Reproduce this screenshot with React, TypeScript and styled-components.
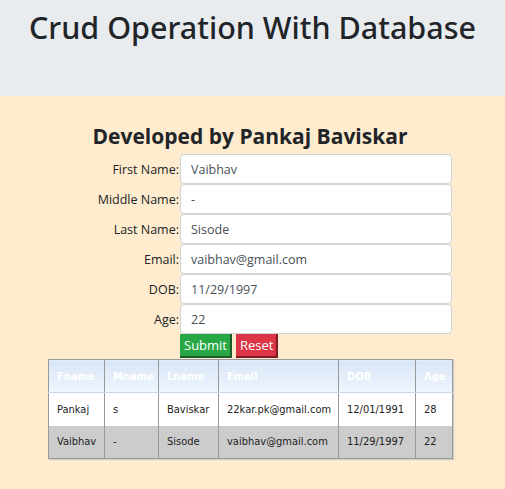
import styled, { createGlobalStyle } from "styled-components";

const GlobalStyle = createGlobalStyle`
  html, body {
    margin: 0;
    padding: 0;
    background: #ffebcd;
  }
  * {
    box-sizing: border-box;
  }
`;

// 상단 제목 영역
const Jumbo = styled.header`
  height: 96px;
  background: #e9ecef;
  padding-top: 7px;
`;

const Title = styled.h1`
  margin: 0;
  text-align: center;
  font-family: "Noto Sans", "Open Sans", sans-serif;
  font-weight: 500;
  font-size: 30.5px;
  line-height: 40px;
  color: #212529;
`;

const Page = styled.main`
  min-height: 393px;
  background: #ffebcd;
  padding: 27px 0 0 48px;
`;

const Subtitle = styled.h3`
  margin: 0 0 5px;
  width: 404px;
  text-align: center;
  font-family: "Open Sans", "Noto Sans", sans-serif;
  font-weight: 700;
  font-size: 21px;
  line-height: 26px;
  color: #212529;
`;

const Form = styled.form`
  display: grid;
  grid-template-columns: 132px 272px;
  margin-bottom: 1px;
  font-family: "Open Sans", "Noto Sans", sans-serif;
  font-size: 12.5px;
  color: #212529;
`;

const Label = styled.label`
  display: flex;
  align-items: center;
  justify-content: flex-end;
  height: 30px;
  padding-right: 1px;
`;

const Input = styled.input`
  height: 30px;
  width: 100%;
  margin: 0;
  padding: 0 10px;
  border: 1px solid #ced4da;
  border-radius: 4px;
  background: #fff;
  font: inherit;
  color: #495057;
  outline: none;
`;

const Actions = styled.div`
  grid-column: 2;
  display: flex;
  gap: 4px;
  height: 24px;
`;

const Button = styled.button<{ $tone: "green" | "red" }>`
  height: 24px;
  padding: 0 3px 0 4px;
  border: none;
  border-right: 2px solid;
  border-bottom: 2px solid;
  border-color: ${(p) => (p.$tone === "green" ? "#1e5a2c" : "#7a1e26")};
  background: ${(p) => (p.$tone === "green" ? "#28a745" : "#dc3545")};
  color: #fff;
  font-family: "Open Sans", "Noto Sans", sans-serif;
  font-size: 13px;
  line-height: 22px;
`;

const Table = styled.table`
  width: 404px;
  table-layout: fixed;
  border-collapse: collapse;
  border: 1px solid #999;
  box-shadow: 1px 1px 1px #ccc;
  font-family: "DejaVu Sans Condensed", "DejaVu Sans", sans-serif;
  font-size: 11px;
  color: #222;
`;

const Th = styled.th`
  height: 33px;
  padding: 0 8px;
  text-align: left;
  font-weight: 700;
  color: #fff;
  background: linear-gradient(#d9e6f7, #eef5fd);
  border-right: 1px solid #999;
  border-bottom: 1px solid #c8d6e6;
`;

const Row = styled.tr<{ $alt?: boolean }>`
  background: ${(p) => (p.$alt ? "#ccc" : "#fff")};
`;

const Td = styled.td`
  height: 33px;
  padding: 0 8px;
  white-space: nowrap;
  border-right: 1px solid #999;
`;

const fields = [
  { label: "First Name:", value: "Vaibhav" },
  { label: "Middle Name:", value: "-" },
  { label: "Last Name:", value: "Sisode" },
  { label: "Email:", value: "vaibhav@gmail.com" },
  { label: "DOB:", value: "11/29/1997" },
  { label: "Age:", value: "22" },
];

const columns = [
  { name: "Fname", width: 56 },
  { name: "Mname", width: 54 },
  { name: "Lname", width: 60 },
  { name: "Email", width: 120 },
  { name: "DOB", width: 77 },
  { name: "Age", width: 37 },
];

const people = [
  ["Pankaj", "s", "Baviskar", "22kar.pk@gmail.com", "12/01/1991", "28"],
  ["Vaibhav", "-", "Sisode", "vaibhav@gmail.com", "11/29/1997", "22"],
];

function App() {
  return (
    <>
      <GlobalStyle />
      <Jumbo>
        <Title>Crud Operation With Database</Title>
      </Jumbo>
      <Page>
        <Subtitle>Developed by Pankaj Baviskar</Subtitle>
        <Form onSubmit={(e) => e.preventDefault()}>
          {fields.map((f) => (
            <>
              <Label key={f.label + "l"}>{f.label}</Label>
              <Input key={f.label + "i"} defaultValue={f.value} />
            </>
          ))}
          <Actions>
            <Button $tone="green" type="submit">Submit</Button>
            <Button $tone="red" type="reset">Reset</Button>
          </Actions>
        </Form>
        <Table>
          <colgroup>
            {columns.map((c) => (
              <col key={c.name} style={{ width: c.width }} />
            ))}
          </colgroup>
          <thead>
            <tr>
              {columns.map((c) => (
                <Th key={c.name}>{c.name}</Th>
              ))}
            </tr>
          </thead>
          <tbody>
            {people.map((p, i) => (
              <Row key={p[0]} $alt={i === 1}>
                {p.map((v, j) => (
                  <Td key={j}>{v}</Td>
                ))}
              </Row>
            ))}
          </tbody>
        </Table>
      </Page>
    </>
  );
}

export default App;
